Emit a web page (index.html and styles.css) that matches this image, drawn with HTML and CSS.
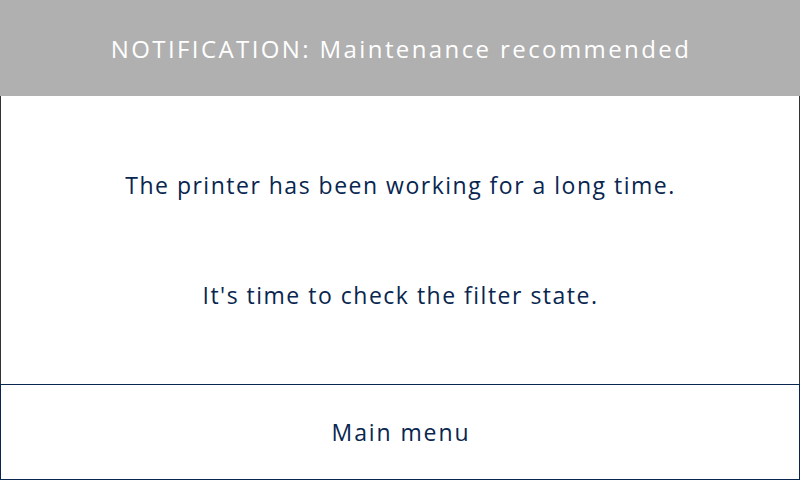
FILE: index.html
```html
<!DOCTYPE html>
<html>
<head>
<meta charset="utf-8">
<link rel="stylesheet" href="styles.css">
</head>
<body>
<div class="screen">
  <header class="header">NOTIFICATION: Maintenance recommended</header>
  <main class="content">
    <p class="line">The printer has been working for a long time.</p>
    <p class="line">It's time to check the filter state.</p>
  </main>
  <div class="footer">Main menu</div>
</div>
</body>
</html>
```

FILE: styles.css
```css
html, body {
  margin: 0;
  padding: 0;
  width: 800px;
  height: 480px;
  background: #ffffff;
  overflow: hidden;
}
.screen {
  width: 800px;
  height: 480px;
  display: flex;
  flex-direction: column;
  font-family: "Open Sans", "Noto Sans", sans-serif;
  color: #082650;
}
.header {
  height: 96px;
  flex: none;
  background: #b0b0b0;
  color: #ffffff;
  display: flex;
  align-items: center;
  justify-content: center;
  font-size: 24px;
  letter-spacing: 2.4px;
  padding-left: 2px;
}
.content {
  flex: 1;
  border-left: 1px solid #333333;
  border-right: 1px solid #333333;
  display: flex;
  flex-direction: column;
  align-items: center;
  justify-content: center;
  gap: 80px;
}
.line {
  margin: 0;
  font-size: 23px;
  line-height: 30px;
  letter-spacing: 1.5px;
  padding-left: 1px;
}
.footer {
  height: 96px;
  flex: none;
  box-sizing: border-box;
  border: 1px solid #082650;
  display: flex;
  align-items: center;
  justify-content: center;
  font-size: 23px;
  letter-spacing: 1.9px;
  padding-left: 2px;
}
```
